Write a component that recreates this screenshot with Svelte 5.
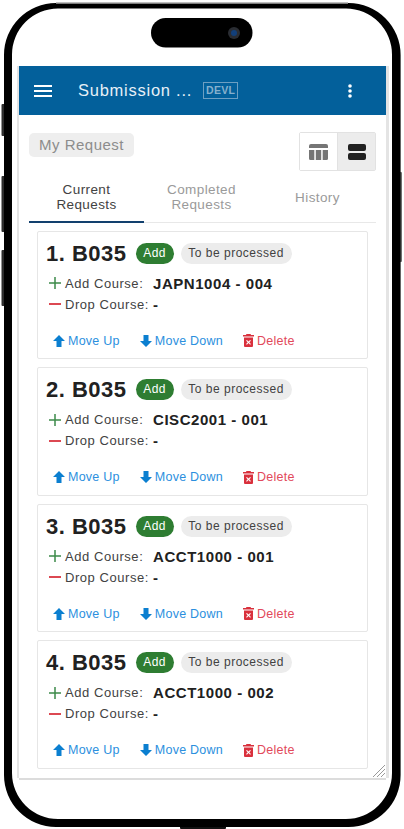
<script>
	const requests = [
		{ id: 1, course: 'JAPN1004 - 004' },
		{ id: 2, course: 'CISC2001 - 001' },
		{ id: 3, course: 'ACCT1000 - 001' },
		{ id: 4, course: 'ACCT1000 - 002' }
	];
</script>

<div class="phone">
	<!-- device frame sits over the screen -->
	<svg class="frame" width="404" height="829" viewBox="0 0 404 829" aria-hidden="true">
		<g fill="#2c2c2c">
			<rect x="1.500" y="104" width="4" height="32" rx="1" />
			<rect x="1.500" y="176" width="4" height="56" rx="1" />
			<rect x="1.500" y="250" width="4" height="56" rx="1" />
			<rect x="399" y="172" width="3" height="90" rx="1" fill="#6f6f6f" />
			<rect x="180" y="825" width="46" height="4" rx="1" fill="#111" />
		</g>
		<path
			fill-rule="evenodd"
			fill="#000"
			d="M56 3H348.600A52 52 0 0 1 400.600 55V775A52 52 0 0 1 348.600 827H56A52 52 0 0 1 4 775V55A52 52 0 0 1 56 3Z
			M58 8.500A46 46 0 0 0 12 54.500V773A46 46 0 0 0 58 819H346A46 46 0 0 0 392 773V54.500A46 46 0 0 0 346 8.500Z"
		/>
		<path d="M56 3H348" stroke="#a8a8a8" stroke-width="1.500" />
		<rect x="151" y="18" width="101.500" height="29.500" rx="14.700" fill="#000" />
		<circle cx="234" cy="33" r="6" fill="#2a2d33" />
		<circle cx="234" cy="33" r="3" fill="#123f7a" />
	</svg>

	<div class="screen">
		<header class="appbar">
			<svg class="menu" width="18" height="12" viewBox="0 0 18 12" aria-hidden="true">
				<path d="M0 1h18M0 6h18M0 11h18" stroke="#fff" stroke-width="1.800" />
			</svg>
			<span class="title">Submission ...</span>
			<span class="env">DEVL</span>
			<svg class="more" width="4" height="14" viewBox="0 0 4 14" aria-hidden="true">
				<circle cx="2" cy="2" r="1.800" fill="#fff" />
				<circle cx="2" cy="7" r="1.800" fill="#fff" />
				<circle cx="2" cy="12" r="1.800" fill="#fff" />
			</svg>
		</header>

		<main class="content">
			<div class="toolbar">
				<span class="chip">My Request</span>
				<div class="toggle">
					<button type="button" aria-label="Table view">
						<svg width="19" height="16" viewBox="0 0 19 16">
							<path d="M2 0h15a2 2 0 0 1 2 2v2H0V2a2 2 0 0 1 2-2zM0 6h5.300v10H1.500A1.500 1.500 0 0 1 0 14.500zM6.800 6h5.400v10H6.800zM13.700 6H19v8.500a1.500 1.500 0 0 1-1.500 1.500h-3.800z" fill="#757575" />
						</svg>
					</button>
					<button type="button" class="on" aria-label="Card view">
						<svg width="18" height="16" viewBox="0 0 18 16">
							<rect width="18" height="7" rx="2" fill="#212121" />
							<rect y="9" width="18" height="7" rx="2" fill="#212121" />
						</svg>
					</button>
				</div>
			</div>

			<nav class="tabs">
				<span class="tab active">Current<br />Requests</span>
				<span class="tab">Completed<br />Requests</span>
				<span class="tab">History</span>
			</nav>

			<div class="cards">
				{#each requests as r}
					<article class="card">
						<div class="head">
							<h2>{r.id}. B035</h2>
							<span class="pill add">Add</span>
							<span class="pill status">To be processed</span>
						</div>
						<div class="line first">
							<svg class="sign" width="12" height="12" viewBox="0 0 12 12"><path d="M0 6h12M6 0v12" stroke="#3d8b4a" stroke-width="1.500" /></svg>
							<span class="label">Add Course:</span>
							<b>{r.course}</b>
						</div>
						<div class="line">
							<svg class="sign" width="12" height="12" viewBox="0 0 12 12"><path d="M0 6h12" stroke="#d8343f" stroke-width="1.800" /></svg>
							<span class="label">Drop Course:</span>
							<b>-</b>
						</div>
						<div class="actions">
							<span class="act">
								<svg width="12" height="12" viewBox="0 0 12 12"><path d="M6 0l6 6H8.500v6h-5V6H0z" fill="#0b7fd0" /></svg>
								Move Up
							</span>
							<span class="act gap">
								<svg width="12" height="12" viewBox="0 0 12 12"><path d="M6 12L0 6h3.500V0h5v6H12z" fill="#0b7fd0" /></svg>
								Move Down
							</span>
							<span class="act gap del">
								<svg width="11" height="13" viewBox="0 0 11 13"><path fill-rule="evenodd" d="M3.500 0h4l.6 1H11v1.500H0V1h2.900zM1 3.500h9V12a1 1 0 0 1-1 1H2a1 1 0 0 1-1-1zM3.900 6l-.8.800L4.700 8.300 3.100 9.900l.8.800 1.600-1.600 1.600 1.600.8-.8-1.600-1.600 1.600-1.500L7.100 6 5.500 7.500z" fill="#d9303c" /></svg>
								Delete
							</span>
						</div>
					</article>
				{/each}
			</div>
		</main>

		<svg class="grip" width="12" height="12" viewBox="0 0 12 12" aria-hidden="true">
			<path d="M0 12L12 0M4 12l8-8M8 12l4-4" stroke="#999" stroke-width="1" />
		</svg>
	</div>
</div>

<style>
	:global(body) {
		margin: 0;
		background: #fff;
	}

	.phone {
		position: relative;
		width: 404px;
		height: 829px;
		box-sizing: border-box;
		padding: 66px 0 0 19px;
		overflow: hidden;
		font-family: 'Liberation Sans', Arial, sans-serif;
		color: #424242;
	}

	.frame {
		position: absolute;
		top: 0;
		left: 0;
		z-index: 2;
		pointer-events: none;
	}

	.screen {
		position: relative;
		width: 367px;
		height: 712px;
		background: #fff;
		box-shadow: -2px 0 0 #e4e4e4, 3px 0 0 #e4e4e4, 0 2px 0 #dcdcdc;
	}

	.appbar {
		display: flex;
		align-items: center;
		height: 49px;
		background: #03609b;
		color: #fff;
	}

	.menu {
		margin-left: 15px;
	}

	.title {
		margin-left: 26px;
		font-size: 16.500px;
		letter-spacing: 0.75px;
		color: #e6f0f7;
	}

	.env {
		box-sizing: border-box;
		width: 35px;
		margin-left: 11px;
		padding: 1px 0;
		border: 1px solid #6d9fc2;
		font-size: 10.500px;
		line-height: 13px;
		text-align: center;
		font-weight: 700;
		letter-spacing: 0.3px;
		color: #86b0cd;
	}

	.more {
		margin-left: auto;
		margin-right: 34px;
	}

	.content {
		padding: 17px 10px 0;
	}

	.toolbar {
		display: flex;
		justify-content: space-between;
		align-items: flex-start;
	}

	.chip {
		margin-top: 1px;
		padding: 0 10px;
		border-radius: 5px;
		background: #eee;
		font-size: 15px;
		line-height: 24px;
		letter-spacing: 0.5px;
		color: #8c8c8c;
	}

	.toggle {
		display: flex;
		border: 1px solid #e2e2e2;
		border-radius: 2px;
	}

	.toggle button {
		display: flex;
		align-items: center;
		justify-content: center;
		width: 37px;
		height: 37px;
		padding: 0;
		border: none;
		background: #fff;
	}

	.toggle button.on {
		width: 38px;
		background: #ececec;
		border-left: 1px solid #e2e2e2;
	}

	.tabs {
		display: grid;
		grid-template-columns: 115px 115px 117px;
		height: 50px;
		margin-top: 1px;
		border-bottom: 1px solid #e8e8e8;
	}

	.tab {
		display: flex;
		align-items: center;
		justify-content: center;
		text-align: center;
		font-size: 13.500px;
		line-height: 15px;
		letter-spacing: 0.4px;
		color: #9a9a9a;
	}

	.tab.active {
		margin-bottom: -1px;
		border-bottom: 2px solid #12406e;
		color: #424242;
	}

	.cards {
		display: flex;
		flex-direction: column;
		gap: 8px;
		margin-top: 7.500px;
		padding: 0 8px;
	}

	.card {
		box-sizing: border-box;
		height: 128.500px;
		padding: 10px 8px 0;
		border: 1px solid #e6e6e6;
		border-radius: 2px;
		background: #fff;
	}

	.head {
		display: flex;
		align-items: center;
		height: 23px;
	}

	h2 {
		margin: 0;
		font-size: 22px;
		line-height: 23px;
		font-weight: 700;
		letter-spacing: 0.5px;
		color: #212121;
	}

	.pill {
		display: inline-block;
		height: 21px;
		border-radius: 11px;
		font-size: 12px;
		line-height: 21px;
		text-align: center;
		letter-spacing: 0.5px;
	}

	.add {
		width: 38px;
		margin-left: 9px;
		background: #2e7d32;
		color: #fff;
	}

	.status {
		width: 111px;
		margin-left: 7px;
		background: #ececec;
		color: #424242;
	}

	.line {
		display: flex;
		align-items: center;
		height: 21px;
		margin-left: 3px;
		font-size: 13px;
		letter-spacing: 0.55px;
	}

	.first {
		margin-top: 8px;
	}

	.sign {
		flex: none;
		margin-right: 4px;
	}

	.label {
		width: 88px;
	}

	.line b {
		font-size: 15px;
		color: #212121;
		letter-spacing: 0.55px;
	}

	.actions {
		display: flex;
		align-items: center;
		height: 16px;
		margin: 18px 0 0 7px;
		font-size: 12.500px;
		letter-spacing: 0.25px;
	}

	.act {
		display: flex;
		align-items: center;
		gap: 3px;
		color: #2b8fde;
	}

	.gap {
		margin-left: 20px;
	}

	.del {
		color: #e2495a;
	}

	.grip {
		position: absolute;
		right: 1px;
		bottom: 1px;
	}
</style>
